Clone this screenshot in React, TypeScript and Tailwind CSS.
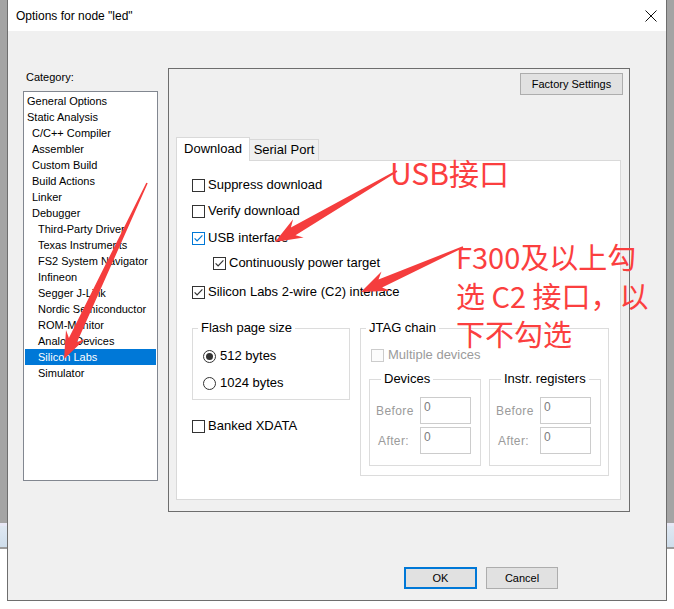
import React from 'react';

type Pt = [number, number];

const categories: [string, number][] = [
  ['General Options', 0],
  ['Static Analysis', 0],
  ['C/C++ Compiler', 1],
  ['Assembler', 1],
  ['Custom Build', 1],
  ['Build Actions', 1],
  ['Linker', 1],
  ['Debugger', 1],
  ['Third-Party Driver', 2],
  ['Texas Instruments', 2],
  ['FS2 System Navigator', 2],
  ['Infineon', 2],
  ['Segger J-Link', 2],
  ['Nordic Semiconductor', 2],
  ['ROM-Monitor', 2],
  ['Analog Devices', 2],
  ['Silicon Labs', 2],
  ['Simulator', 2],
];

const indent = ['pl-[2px]', 'pl-[7px]', 'pl-[13px]'];

// tapering annotation arrow, wings swept back a little
function arrowPoints(tail: Pt, tip: Pt, headLen = 27, headW = 21, shaftW = 9) {
  const dx = tip[0] - tail[0];
  const dy = tip[1] - tail[1];
  const len = Math.hypot(dx, dy);
  const ux = dx / len;
  const uy = dy / len;
  const nx = -uy;
  const ny = ux;
  const jx = tip[0] - ux * headLen * 0.78;
  const jy = tip[1] - uy * headLen * 0.78;
  const wx = tip[0] - ux * headLen;
  const wy = tip[1] - uy * headLen;
  const pts: Pt[] = [
    [tail[0] + nx * 0.8, tail[1] + ny * 0.8],
    [jx + (nx * shaftW) / 2, jy + (ny * shaftW) / 2],
    [wx + (nx * headW) / 2, wy + (ny * headW) / 2],
    tip,
    [wx - (nx * headW) / 2, wy - (ny * headW) / 2],
    [jx - (nx * shaftW) / 2, jy - (ny * shaftW) / 2],
    [tail[0] - nx * 0.8, tail[1] - ny * 0.8],
  ];
  return pts.map((p) => `${p[0].toFixed(1)},${p[1].toFixed(1)}`).join(' ');
}

function CheckBox({ checked, focus, disabled }: { checked?: boolean; focus?: boolean; disabled?: boolean }) {
  let cls = 'border-[#333333] bg-white';
  if (focus) cls = 'border-[#0078d7] bg-white';
  if (disabled) cls = 'border-[#cccccc] bg-[#fcfcfc]';
  return (
    <span className={`flex h-[13px] w-[13px] shrink-0 items-center justify-center border ${cls}`}>
      {checked && (
        <svg width="11" height="11" viewBox="0 0 11 11">
          <path d="M1.6 5.4 L4.1 7.9 L9.4 2.4" fill="none" stroke={focus ? '#0078d7' : '#333333'} strokeWidth="1.2" />
        </svg>
      )}
    </span>
  );
}

function CheckRow({ label, checked, focus, className = '' }: { label: string; checked?: boolean; focus?: boolean; className?: string }) {
  return (
    <div className={`flex h-[20px] items-center gap-[3px] text-[13px] ${className}`}>
      <CheckBox checked={checked} focus={focus} />
      <span>{label}</span>
    </div>
  );
}

function Radio({ label, on, className = '' }: { label: string; on?: boolean; className?: string }) {
  return (
    <div className={`flex h-[20px] items-center gap-[4px] pl-[10px] text-[13px] ${className}`}>
      <span className="flex h-[13px] w-[13px] items-center justify-center rounded-full border border-[#333333] bg-white">
        {on && <span className="h-[7px] w-[7px] rounded-full bg-[#333333]" />}
      </span>
      <span>{label}</span>
    </div>
  );
}

function NumField({ label, className = '' }: { label: string; className?: string }) {
  return (
    <div className={`flex items-center ${className}`}>
      <span className="w-[44px] text-[12px] tracking-[0.4px] text-[#9b9b9b]">{label}</span>
      <div className="h-[27px] w-[51px] border border-[#cccccc] bg-white pl-[3px] pt-[2px] text-[12px] leading-[14px] text-[#7d7d7d]">0</div>
    </div>
  );
}

function SubGroup({ title, className = '' }: { title: string; className?: string }) {
  return (
    <fieldset className={`h-[95px] w-[112px] border border-[#dcdcdc] pl-[6px] ${className}`}>
      <legend className="ml-[5px] px-[3px] text-[13px] leading-[16px]">{title}</legend>
      <NumField label="Before" className="mt-[10px]" />
      <NumField label="After:" className="mt-[3px] [&>span]:pl-[2px]" />
    </fieldset>
  );
}

function Strip() {
  return (
    <div className="flex w-[7px] shrink-0 flex-col">
      <div className="h-[523px] bg-[#a4a4a4]" />
      <div className="h-[3px] bg-[#e8e8f6]" />
      <div className="h-[21px] bg-gradient-to-b from-[#dfe8f2] to-[#cfdeec]" />
      <div className="h-[2px] bg-[#9c9c9c]" />
      <div className="flex-1 bg-white" />
    </div>
  );
}

export default function App() {
  return (
    <div className="relative flex h-[609px] w-[674px] overflow-hidden bg-white font-['Liberation_Sans',Arial,sans-serif] text-black">
      <Strip />

      <div className="flex h-[601px] w-[660px] shrink-0 flex-col border-x border-b border-[#6e6e6e] bg-[#f0f0f0]">
        {/* title bar */}
        <div className="flex h-[31px] items-center justify-between bg-white pl-[8px] pr-[8px]">
          <span className="text-[12px]">Options for node "led"</span>
          <svg width="12" height="12" viewBox="0 0 12 12" className="mr-[1px]">
            <path d="M0.5 0.5 L11.5 11.5 M11.5 0.5 L0.5 11.5" stroke="#111111" strokeWidth="1" />
          </svg>
        </div>

        <div className="flex">
          {/* category list */}
          <div className="ml-[15px] mt-[39px] flex flex-col">
            <div className="mb-[7px] pl-[3px] text-[11px] leading-[14px]">Category:</div>
            <div className="h-[390px] w-[135px] border border-[#828790] bg-white px-[1px] pt-[1px]">
              {categories.map(([name, lvl]) => (
                <div
                  key={name}
                  className={`h-[16px] whitespace-nowrap text-[11px] leading-[16px] ${indent[lvl]} ${
                    name === 'Silicon Labs' ? 'bg-[#0078d7] text-white' : ''
                  }`}
                >
                  {name}
                </div>
              ))}
            </div>
          </div>

          {/* option page */}
          <div className="ml-[10px] mt-[37px] flex h-[444px] w-[462px] flex-col border border-[#6d6d6d]">
            <div className="flex justify-end pr-[6px] pt-[4px]">
              <button className="h-[22px] w-[103px] border border-[#adadad] bg-[#e1e1e1] text-[11px]">Factory Settings</button>
            </div>

            <div className="ml-[7px] mt-[42px] flex items-end">
              <div className="relative z-10 -mb-px flex h-[24px] w-[74px] items-start justify-center border-x border-t border-[#d9d9d9] bg-white pt-[3px] text-[13px] leading-[16px]">
                Download
              </div>
              <div className="flex h-[21px] w-[69px] items-start justify-center border-r border-t border-[#d9d9d9] bg-[#f0f0f0] pt-[2px] text-[13px] leading-[16px]">
                Serial Port
              </div>
            </div>

            <div className="ml-[7px] h-[340px] w-[445px] border border-[#d9d9d9] bg-white pl-[15px] pt-[14px]">
              <CheckRow label="Suppress download" />
              <CheckRow label="Verify download" className="mt-[6px]" />
              <CheckRow label="USB interface" checked focus className="mt-[7px]" />
              <CheckRow label="Continuously power target" checked className="ml-[21px] mt-[5px]" />
              <CheckRow label="Silicon Labs 2-wire (C2) interface" checked className="mt-[9px]" />

              <div className="mt-[18px] flex gap-[10px]">
                <div className="flex w-[158px] flex-col">
                  <fieldset className="h-[80px] border border-[#dcdcdc]">
                    <legend className="ml-[5px] px-[3px] text-[13px] leading-[16px]">Flash page size</legend>
                    <Radio label="512 bytes" on className="mt-[10px]" />
                    <Radio label="1024 bytes" className="mt-[7px]" />
                  </fieldset>
                  <CheckRow label="Banked XDATA" className="mt-[16px]" />
                </div>

                <fieldset className="h-[156px] w-[249px] border border-[#dcdcdc]">
                  <legend className="ml-[5px] px-[3px] text-[13px] leading-[16px]">JTAG chain</legend>
                  <div className="ml-[10px] mt-[9px] flex h-[20px] items-center gap-[4px] text-[13px] text-[#9b9b9b]">
                    <CheckBox disabled />
                    <span>Multiple devices</span>
                  </div>
                  <div className="ml-[8px] mt-[6px] flex gap-[8px]">
                    <SubGroup title="Devices" />
                    <SubGroup title="Instr. registers" />
                  </div>
                </fieldset>
              </div>
            </div>
          </div>
        </div>

        {/* dialog buttons */}
        <div className="mt-[55px] flex gap-[9px] pl-[396px]">
          <button className="h-[22px] w-[73px] border-2 border-[#0078d7] bg-[#e1e1e1] text-[11px]">OK</button>
          <button className="h-[22px] w-[72px] border border-[#adadad] bg-[#e1e1e1] text-[11px]">Cancel</button>
        </div>
      </div>

      <Strip />

      {/* red annotations drawn over the screenshot */}
      <div className="pointer-events-none absolute inset-0 font-['Noto_Sans_CJK_SC','Noto_Sans',sans-serif] text-[#fb3f3f]">
        <svg width="674" height="609" className="absolute left-0 top-0">
          <polygon points={arrowPoints([147, 183], [64, 359])} fill="#f53d3d" />
          <polygon points={arrowPoints([397, 171], [275, 242])} fill="#f53d3d" />
          <polygon points={arrowPoints([463, 247], [361, 292])} fill="#f53d3d" />
        </svg>
        <div className="absolute left-[390px] top-[157px] text-[30px] leading-[30px]">USB接口</div>
        <div className="absolute left-[456px] top-[237px] text-[29px] leading-[38px]">
          <div>F300及以上勾</div>
          <div className="mt-[1px]">选 C2 接口，以</div>
          <div className="mt-[5px] leading-[28px]">下不勾选</div>
        </div>
      </div>
    </div>
  );
}
